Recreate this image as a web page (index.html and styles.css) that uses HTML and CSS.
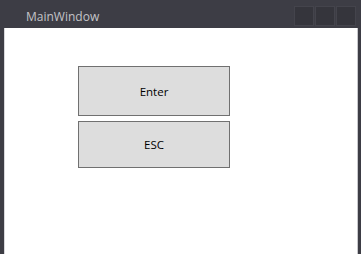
FILE: index.html
```html
<!DOCTYPE html>
<html>
<head>
<meta charset="utf-8">
<link rel="stylesheet" href="styles.css">
</head>
<body>
<div class="window">
  <div class="titlebar">
    <span class="title">MainWindow</span>
    <div class="caption-buttons">
      <div class="cbtn"></div>
      <div class="cbtn"></div>
      <div class="cbtn"></div>
    </div>
  </div>
  <div class="client">
    <div class="btn btn-enter">Enter</div>
    <div class="btn btn-esc">ESC</div>
  </div>
</div>
</body>
</html>
```
FILE: styles.css
```css
html, body {
  margin: 0;
  padding: 0;
  width: 361px;
  height: 254px;
  overflow: hidden;
  background: #3d3d45;
}
.window {
  display: flex;
  flex-direction: column;
  height: 254px;
}
.titlebar {
  height: 28px;
  display: flex;
  align-items: flex-start;
  justify-content: space-between;
  flex: none;
}
.title {
  font-family: "Open Sans", "Noto Sans", sans-serif;
  font-size: 12px;
  color: #c4c4c8;
  margin-left: 26px;
  margin-top: 9px;
  line-height: 16px;
}
.caption-buttons {
  display: flex;
  gap: 1px;
  margin-top: 6px;
  margin-right: 5px;
}
.cbtn {
  width: 18px;
  height: 18px;
  background: #35353c;
  border: 1px solid #44444c;
  box-sizing: content-box;
}
.client {
  flex: 1;
  background: #ffffff;
  margin: 0 3px 0 4px;
  border-left: 1px solid #d8d8dc;
  border-right: 1px solid #c8c8cc;
  padding: 38px 0 0 73px;
  display: flex;
  flex-direction: column;
  gap: 5px;
}
.btn {
  box-sizing: border-box;
  width: 152px;
  background: #dddddd;
  border: 1px solid #707070;
  display: flex;
  align-items: center;
  justify-content: center;
  font-family: "Open Sans", "Noto Sans", sans-serif;
  font-size: 11.5px;
  color: #000;
}
.btn-enter { height: 50px; }
.btn-esc { height: 47px; }
```
